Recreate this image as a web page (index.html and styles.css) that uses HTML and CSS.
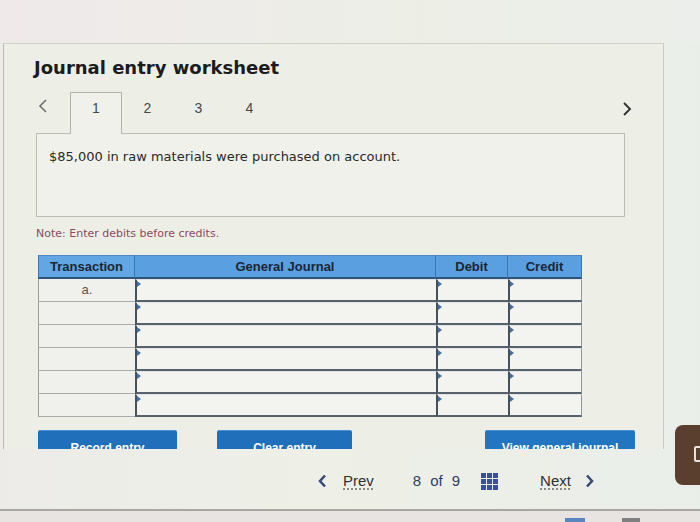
FILE: index.html
```html
<!DOCTYPE html>
<html>
<head>
<meta charset="utf-8">
<title>Journal entry worksheet</title>
<link rel="stylesheet" href="styles.css">
</head>
<body>
<div class="screen">
  <div class="topband"></div>
  <div class="panel">
    <div class="viewport">
      <h1 class="title">Journal entry worksheet</h1>
      <div class="tabs">
        <span class="tab-arrow tab-arrow-left"><svg width="10" height="14" viewBox="0 0 10 14"><path d="M8 1 L2 7 L8 13" fill="none" stroke="#707070" stroke-width="1.6"/></svg></span>
        <span class="tab tab-active">1</span>
        <span class="tab">2</span>
        <span class="tab">3</span>
        <span class="tab">4</span>
        <span class="tab-arrow tab-arrow-right"><svg width="10" height="14" viewBox="0 0 10 14"><path d="M2 1 L8 7 L2 13" fill="none" stroke="#333333" stroke-width="1.9"/></svg></span>
      </div>
      <div class="prompt">$85,000 in raw materials were purchased on account.</div>
      <p class="note">Note: Enter debits before credits.</p>
      <div class="journal">
        <div class="hd hd-first">Transaction</div>
        <div class="hd">General Journal</div>
        <div class="hd">Debit</div>
        <div class="hd">Credit</div>

        <div class="tx">a.</div><div class="in"></div><div class="in"></div><div class="in in-last"></div>
        <div class="tx"></div><div class="in"></div><div class="in"></div><div class="in in-last"></div>
        <div class="tx"></div><div class="in"></div><div class="in"></div><div class="in in-last"></div>
        <div class="tx"></div><div class="in"></div><div class="in"></div><div class="in in-last"></div>
        <div class="tx"></div><div class="in"></div><div class="in"></div><div class="in in-last"></div>
        <div class="tx"></div><div class="in"></div><div class="in"></div><div class="in in-last"></div>
      </div>
      <div class="actions">
        <button class="btn btn-record">Record entry</button>
        <button class="btn btn-clear">Clear entry</button>
        <button class="btn btn-view">View general journal</button>
      </div>
    </div>
  </div>
  <div class="footer">
    <svg class="chev" width="9" height="14" viewBox="0 0 9 14"><path d="M7 1.5 L2 7 L7 12.5" fill="none" stroke="#3a4b78" stroke-width="2.6"/></svg>
    <a class="navlink nav-prev">Prev</a>
    <span class="count"><span>8</span><span>of</span><span>9</span></span>
    <span class="gridicon"><i></i><i></i><i></i><i></i><i></i><i></i><i></i><i></i><i></i></span>
    <a class="navlink nav-next">Next</a>
    <svg class="chev chev-next" width="9" height="14" viewBox="0 0 9 14"><path d="M2 1.5 L7 7 L2 12.5" fill="none" stroke="#3a4b78" stroke-width="2.6"/></svg>
  </div>
  <div class="taskbar">
    <span class="tb tb-blue"></span>
    <span class="tb tb-grey"></span>
  </div>
  <div class="widget"><span class="widget-icon"></span></div>
</div>
</body>
</html>
```
FILE: styles.css
```css
* { box-sizing: border-box; }
html, body { margin: 0; padding: 0; }
body {
  background: #eceee6;
  font-family: "DejaVu Sans", Verdana, sans-serif;
}
.screen {
  width: 700px;
  height: 522px;
  overflow: hidden;
  position: relative;
  background: linear-gradient(90deg, #ecebe8 0%, #eef0e7 45%, #eaeee9 100%);
}
.topband { height: 43px; background: linear-gradient(90deg, #efe9ea, #eceee6 60%, #ebeeea); }

.panel {
  margin-left: 3px;
  width: 661px;
  border-left: 1px solid #b9b8b2;
  border-top: 1px solid #d0d1c9;
  border-right: 1px solid #cac9c3;
  background: #edefe7;
}
.viewport {
  height: 405px;
  overflow: hidden;
  padding-left: 32px;
}
.title {
  margin: 13px 0 0 -2px;
  font: bold 18px/22px "DejaVu Sans", Verdana, sans-serif;
  color: #1c1c1c;
}

.tabs {
  display: flex;
  align-items: flex-start;
  width: 600px;
  height: 41px;
  margin-top: 13px;
}
.tab-arrow-left { width: 34px; padding: 7px 0 0 2px; }
.tab-arrow-right { margin-left: auto; padding: 10px 4px 0 0; }
.tab-arrow svg { display: block; }
.tab {
  width: 51px;
  height: 41px;
  padding-top: 8px;
  text-align: center;
  font: 14px/16px "Liberation Sans", Arial, sans-serif;
  color: #474747;
}
.tab-active {
  width: 52px;
  height: 42px;
  padding-top: 7px;
  border: 1px solid #b3b3ad;
  border-bottom: 0;
  background: #eff1ea;
  position: relative;
  z-index: 1;
}

.prompt {
  width: 589px;
  height: 84px;
  border: 1px solid #bcbcb6;
  padding: 15px 12px 0;
  font: 13px/16px "DejaVu Sans", Verdana, sans-serif;
  color: #2a2a2a;
  background: #eff1ea;
}
.note {
  margin: 10px 0 0;
  font: 11px/14px "DejaVu Sans", Verdana, sans-serif;
  color: #8c4b5e;
}

.journal {
  display: grid;
  grid-template-columns: 97px 301px 72px 74px;
  grid-template-rows: 24px repeat(6, 23px);
  margin: 14px 0 0 2px;
  width: 544px;
}
.hd {
  display: flex;
  align-items: center;
  justify-content: center;
  background: #5a9fe0;
  border-top: 1px solid #4a88c6;
  border-right: 1px solid #3d74ad;
  border-bottom: 2px solid #2f5379;
  font: bold 13px/16px "Liberation Sans", Arial, sans-serif;
  color: #1b2634;
}
.hd-first { border-left: 1px solid #3d74ad; background: #63a6e4; }
.tx {
  display: flex;
  align-items: center;
  justify-content: center;
  background: #f0f1ec;
  border-left: 1px solid #9c9c9c;
  border-bottom: 1px solid #aaaaaa;
  font: 13px/16px "Liberation Sans", Arial, sans-serif;
  color: #555555;
}
.in {
  position: relative;
  background: #f3f4f0;
  border-left: 2px solid #46515c;
  border-top: 1px solid #dfe3e6;
  border-bottom: 2px solid #58626c;
}
.in-last { border-right: 1px solid #8f9499; }
.in::before {
  content: "";
  position: absolute;
  top: 1px;
  left: 0;
  border-top: 3px solid transparent;
  border-bottom: 3px solid transparent;
  border-left: 4px solid #3e6fa8;
}

.actions {
  display: flex;
  margin-top: 13px;
}
.btn {
  height: 34px;
  border: 0;
  border-top: 1px solid #4a8fd0;
  border-radius: 2px;
  padding: 0;
  background: #1f6fba;
  color: #ffffff;
  font: bold 12px/28px "Liberation Sans", Arial, sans-serif;
  text-align: center;
}
.btn-record { width: 139px; margin-left: 2px; }
.btn-clear { width: 135px; margin-left: 40px; }
.btn-view { width: 150px; margin-left: 133px; background: #2275c0; }

.footer {
  height: 60px;
  display: flex;
  align-items: center;
  padding: 4px 0 0 318px;
}
.chev { display: block; }
.navlink {
  font: 15px/18px "Liberation Sans", Arial, sans-serif;
  color: #2c2f36;
  text-decoration: underline dotted #6a6a6a;
  text-underline-offset: 3px;
}
.nav-prev { margin-left: 16px; }
.count {
  display: flex;
  gap: 9px;
  margin-left: 39px;
  font: 15px/18px "Liberation Sans", Arial, sans-serif;
  color: #2f3d63;
}
.gridicon {
  display: grid;
  grid-template-columns: repeat(3, 5px);
  grid-template-rows: repeat(3, 5px);
  gap: 1px;
  margin-left: 21px;
}
.gridicon i { background: #3b4f9c; }
.nav-next { margin-left: 42px; }
.chev-next { margin-left: 14px; }

.taskbar {
  height: 13px;
  border-top: 2px solid #aaa6a2;
  background: #e8e4e1;
  display: flex;
  align-items: flex-end;
}
.tb { display: block; height: 4px; }
.tb-blue { width: 20px; margin-left: 565px; background: #5a86c0; }
.tb-grey { width: 18px; margin-left: 37px; background: #808080; }

.widget {
  position: absolute;
  left: 675px;
  top: 425px;
  width: 40px;
  height: 60px;
  border-radius: 8px;
  background: #5a3f2f;
}
.widget-icon {
  position: absolute;
  left: 19px;
  top: 21px;
  width: 10px;
  height: 16px;
  border: 2px solid #e8e2dc;
  border-radius: 2px;
}
```
